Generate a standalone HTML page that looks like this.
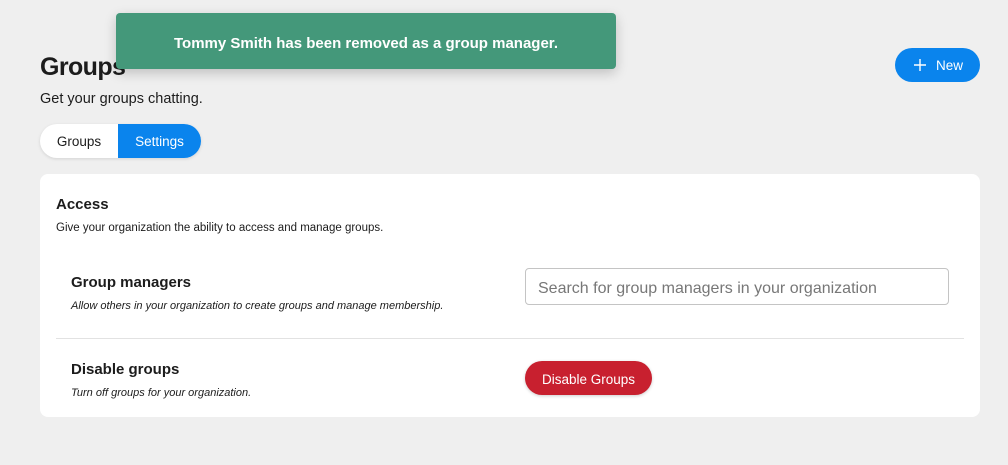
<!DOCTYPE html>
<html><head><meta charset="utf-8"><style>
*{margin:0;padding:0;box-sizing:border-box}
body{width:1008px;height:465px;background:#efefef;font-family:"Liberation Sans",sans-serif;color:#1c1c1c;position:relative;overflow:hidden}
.abs{position:absolute}
h1{position:absolute;left:40px;top:53px;font-size:25px;font-weight:bold;letter-spacing:-0.6px}
.sub{left:40px;top:91px;font-size:14.5px}
.tog{left:40px;top:124px;width:161px;height:34px;border-radius:17px;background:#fff;overflow:hidden;box-shadow:0 1px 3px rgba(0,0,0,.12)}
.tog div{position:absolute;top:0;height:34px;line-height:35px;font-size:13.5px;text-align:center}
.new{left:895px;top:48px;width:85px;height:34px;border-radius:17px;background:#0a84ed;color:#fff;font-size:13.5px;line-height:35px;padding-left:41px}
.card{left:40px;top:174px;width:940px;height:243px;background:#fff;border-radius:8px}
.toast{left:116px;top:13px;width:500px;height:56px;background:#44987a;border-radius:4px;color:#fff;font-weight:bold;font-size:15px;text-align:center;line-height:61px;box-shadow:0 4px 12px rgba(0,0,0,.2)}
.b{font-weight:bold;font-size:15px}
.i{font-style:italic;font-size:11px}
</style></head><body>
<h1>Groups</h1>
<div class="abs sub">Get your groups chatting.</div>
<div class="abs tog"><div style="left:0;width:78px">Groups</div><div style="left:78px;width:83px;background:#0a84ed;color:#fff">Settings</div></div>
<div class="abs new">New</div>
<svg class="abs" style="left:914px;top:59px" width="12" height="12"><path d="M6 0V12M0 6H12" stroke="#fff" stroke-width="1.4"/></svg>
<div class="abs card">
 <div class="abs b" style="left:16px;top:22px">Access</div>
 <div class="abs" style="left:16px;top:48px;font-size:11.5px">Give your organization the ability to access and manage groups.</div>
 <div class="abs b" style="left:31px;top:100px">Group managers</div>
 <div class="abs i" style="left:31px;top:126px">Allow others in your organization to create groups and manage membership.</div>
 <div class="abs" style="left:485px;top:94px;width:424px;height:37px;border:1px solid #c4c4c4;border-radius:4px;padding-left:12px;line-height:39px;font-size:16px;color:#777">Search for group managers in your organization</div>
 <div class="abs" style="left:16px;top:164px;width:908px;height:1px;background:#e2e2e2"></div>
 <div class="abs b" style="left:31px;top:187px">Disable groups</div>
 <div class="abs i" style="left:31px;top:213px">Turn off groups for your organization.</div>
 <div class="abs" style="left:485px;top:187px;width:127px;height:34px;border-radius:17px;background:#c8202f;color:#fff;font-size:13.5px;line-height:37px;text-align:center;box-shadow:0 1px 3px rgba(0,0,0,.2)">Disable Groups</div>
</div>
<div class="abs toast">Tommy Smith has been removed as a group manager.</div>
</body></html>
